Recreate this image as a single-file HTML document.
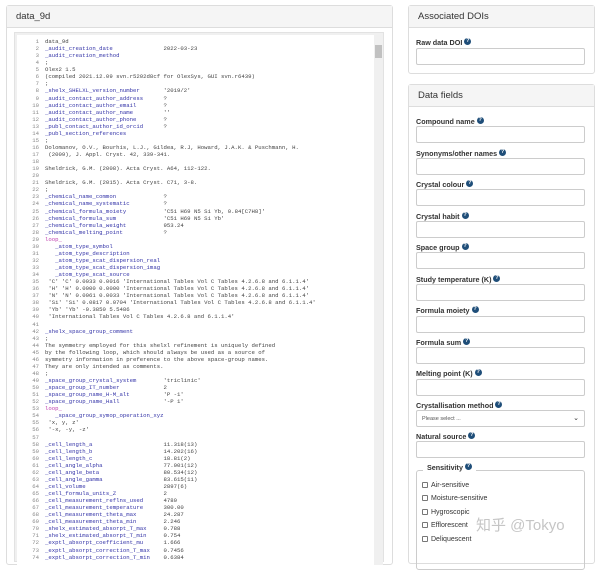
<!DOCTYPE html>
<html><head><meta charset="utf-8"><style>
*{box-sizing:border-box;margin:0;padding:0}
body{width:600px;height:552px;overflow:hidden;background:#fff;font-family:"Liberation Sans",Arial,sans-serif;position:relative}
.panel{position:absolute;border:1px solid #ddd;border-radius:3px;background:#fff}
.ph{background:#f5f5f5;border-bottom:1px solid #ddd;height:22px;padding:5px 9px;font-size:9.5px;color:#333}
#code{position:absolute;left:14px;top:32px;width:370px;height:530px;background:#f0f0f0;border:1px solid #e2e2e2}
#inner{position:absolute;left:2px;top:2px;width:357px;height:530px;background:#fff;overflow:hidden}
.ln{position:absolute;left:0;top:3px;width:22px;text-align:right;font-family:"Liberation Mono",monospace;font-size:5.65px;line-height:7.06px;color:#888;white-space:pre}
.tx{position:absolute;left:28px;top:3px;font-family:"Liberation Mono",monospace;font-size:5.65px;line-height:7.06px;color:#444;white-space:pre}
.k{color:#3434a8}.m{color:#c040b0}
#sb{position:absolute;left:359px;top:2px;width:9px;height:530px;background:#f0f0f0}
#th{position:absolute;left:1px;top:10px;width:7px;height:13px;background:#c1c1c1}
.lab{position:absolute;left:416px;font-size:7.2px;line-height:9px;font-weight:bold;color:#333;white-space:nowrap}
.q{display:inline-block;width:7px;height:7px;border-radius:50%;background:#1f4e79;color:#fff;font-size:5.5px;text-align:center;line-height:7px;vertical-align:top;margin-top:0px;margin-left:2px}
.inp{position:absolute;left:416px;width:169px;height:17px;border:1px solid #ccc;border-radius:2px;background:#fff}
.cb{position:absolute;left:422px;font-size:7px;color:#333;white-space:nowrap}
.cb i{display:inline-block;width:6px;height:6px;border:1px solid #777;border-radius:1px;margin-right:3px;vertical-align:-1px}
</style></head><body>
<div class="panel" style="left:6px;top:5px;width:387px;height:560px">
<div class="ph">data_9d</div></div>
<div id="code"><div id="inner">
<div class="ln">1
2
3
4
5
6
7
8
9
10
11
12
13
14
15
16
17
18
19
20
21
22
23
24
25
26
27
28
29
30
31
32
33
34
35
36
37
38
39
40
41
42
43
44
45
46
47
48
49
50
51
52
53
54
55
56
57
58
59
60
61
62
63
64
65
66
67
68
69
70
71
72
73
74</div>
<div class="tx">data_9d
<span class="k">_audit_creation_date</span>               2022-03-23
<span class="k">_audit_creation_method</span>
;
Olex2 1.5
(compiled 2021.12.09 svn.r5202d8cf for OlexSys, GUI svn.r6439)
;
<span class="k">_shelx_SHELXL_version_number</span>       '2019/2'
<span class="k">_audit_contact_author_address</span>      ?
<span class="k">_audit_contact_author_email</span>        ?
<span class="k">_audit_contact_author_name</span>         ''
<span class="k">_audit_contact_author_phone</span>        ?
<span class="k">_publ_contact_author_id_orcid</span>      ?
<span class="k">_publ_section_references</span>
;
Dolomanov, O.V., Bourhis, L.J., Gildea, R.J, Howard, J.A.K. &amp; Puschmann, H.
 (2009), J. Appl. Cryst. 42, 339-341.

Sheldrick, G.M. (2008). Acta Cryst. A64, 112-122.

Sheldrick, G.M. (2015). Acta Cryst. C71, 3-8.
;
<span class="k">_chemical_name_common</span>              ?
<span class="k">_chemical_name_systematic</span>          ?
<span class="k">_chemical_formula_moiety</span>           'C51 H69 N5 Si Yb, 0.84[C7H8]'
<span class="k">_chemical_formula_sum</span>              'C51 H69 N5 Si Yb'
<span class="k">_chemical_formula_weight</span>           953.24
<span class="k">_chemical_melting_point</span>            ?
<span class="m">loop_</span>
   <span class="k">_atom_type_symbol</span>
   <span class="k">_atom_type_description</span>
   <span class="k">_atom_type_scat_dispersion_real</span>
   <span class="k">_atom_type_scat_dispersion_imag</span>
   <span class="k">_atom_type_scat_source</span>
 'C' 'C' 0.0033 0.0016 'International Tables Vol C Tables 4.2.6.8 and 6.1.1.4'
 'H' 'H' 0.0000 0.0000 'International Tables Vol C Tables 4.2.6.8 and 6.1.1.4'
 'N' 'N' 0.0061 0.0033 'International Tables Vol C Tables 4.2.6.8 and 6.1.1.4'
 'Si' 'Si' 0.0817 0.0704 'International Tables Vol C Tables 4.2.6.8 and 6.1.1.4'
 'Yb' 'Yb' -0.3850 5.5486
 'International Tables Vol C Tables 4.2.6.8 and 6.1.1.4'

<span class="k">_shelx_space_group_comment</span>
;
The symmetry employed for this shelxl refinement is uniquely defined
by the following loop, which should always be used as a source of
symmetry information in preference to the above space-group names.
They are only intended as comments.
;
<span class="k">_space_group_crystal_system</span>        'triclinic'
<span class="k">_space_group_IT_number</span>             2
<span class="k">_space_group_name_H-M_alt</span>          'P -1'
<span class="k">_space_group_name_Hall</span>             '-P 1'
<span class="m">loop_</span>
   <span class="k">_space_group_symop_operation_xyz</span>
 'x, y, z'
 '-x, -y, -z'

<span class="k">_cell_length_a</span>                     11.318(13)
<span class="k">_cell_length_b</span>                     14.202(16)
<span class="k">_cell_length_c</span>                     18.81(2)
<span class="k">_cell_angle_alpha</span>                  77.001(12)
<span class="k">_cell_angle_beta</span>                   80.534(12)
<span class="k">_cell_angle_gamma</span>                  83.615(11)
<span class="k">_cell_volume</span>                       2897(6)
<span class="k">_cell_formula_units_Z</span>              2
<span class="k">_cell_measurement_reflns_used</span>      4780
<span class="k">_cell_measurement_temperature</span>      300.00
<span class="k">_cell_measurement_theta_max</span>        24.287
<span class="k">_cell_measurement_theta_min</span>        2.246
<span class="k">_shelx_estimated_absorpt_T_max</span>     0.788
<span class="k">_shelx_estimated_absorpt_T_min</span>     0.754
<span class="k">_exptl_absorpt_coefficient_mu</span>      1.666
<span class="k">_exptl_absorpt_correction_T_max</span>    0.7456
<span class="k">_exptl_absorpt_correction_T_min</span>    0.6384</div>
</div><div id="sb"><div id="th"></div></div></div>

<div class="panel" style="left:408px;top:5px;width:187px;height:69px"><div class="ph">Associated DOIs</div></div>
<div class="lab" style="top:38px">Raw data DOI<span class="q">?</span></div>
<div class="inp" style="top:48px"></div>

<div class="panel" style="left:408px;top:84px;width:187px;height:480px"><div class="ph">Data fields</div></div>
<div class="lab" style="top:117px">Compound name<span class="q">?</span></div><div class="inp" style="top:126px"></div>
<div class="lab" style="top:149px">Synonyms/other names<span class="q">?</span></div><div class="inp" style="top:158px"></div>
<div class="lab" style="top:180px">Crystal colour<span class="q">?</span></div><div class="inp" style="top:189px"></div>
<div class="lab" style="top:212px">Crystal habit<span class="q">?</span></div><div class="inp" style="top:221px"></div>
<div class="lab" style="top:243px">Space group<span class="q">?</span></div><div class="inp" style="top:252px"></div>
<div class="lab" style="top:275px">Study temperature (K)<span class="q">?</span></div><div class="inp" style="top:284px"></div>
<div class="lab" style="top:306px">Formula moiety<span class="q">?</span></div><div class="inp" style="top:316px"></div>
<div class="lab" style="top:338px">Formula sum<span class="q">?</span></div><div class="inp" style="top:347px"></div>
<div class="lab" style="top:369px">Melting point (K)<span class="q">?</span></div><div class="inp" style="top:379px"></div>
<div class="lab" style="top:401px">Crystallisation method<span class="q">?</span></div>
<div class="inp" style="top:410px;font-size:5.5px;color:#555;padding:5px 0 0 5px">Please select ...<span style="position:absolute;right:5px;top:3px;font-size:7px;color:#333">&#8964;</span></div>
<div class="lab" style="top:432px">Natural source<span class="q">?</span></div><div class="inp" style="top:441px"></div>
<div style="position:absolute;left:416px;top:470px;width:169px;height:100px;border:1px solid #ccc;border-radius:3px"></div>
<div class="lab" style="top:463px;left:423px;background:#fff;padding:0 4px;font-weight:bold">Sensitivity<span class="q">?</span></div>
<div class="cb" style="top:482px"><i></i>Air-sensitive</div>
<div class="cb" style="top:495px"><i></i>Moisture-sensitive</div>
<div class="cb" style="top:509px"><i></i>Hygroscopic</div>
<div class="cb" style="top:522px"><i></i>Efflorescent</div>
<div class="cb" style="top:536px"><i></i>Deliquescent</div>
<div style="position:absolute;left:476px;top:514px;font-size:15px;color:rgba(150,150,150,.55);font-family:'Liberation Sans','Noto Sans CJK SC',sans-serif;white-space:nowrap">知乎 @Tokyo</div>
</body></html>
